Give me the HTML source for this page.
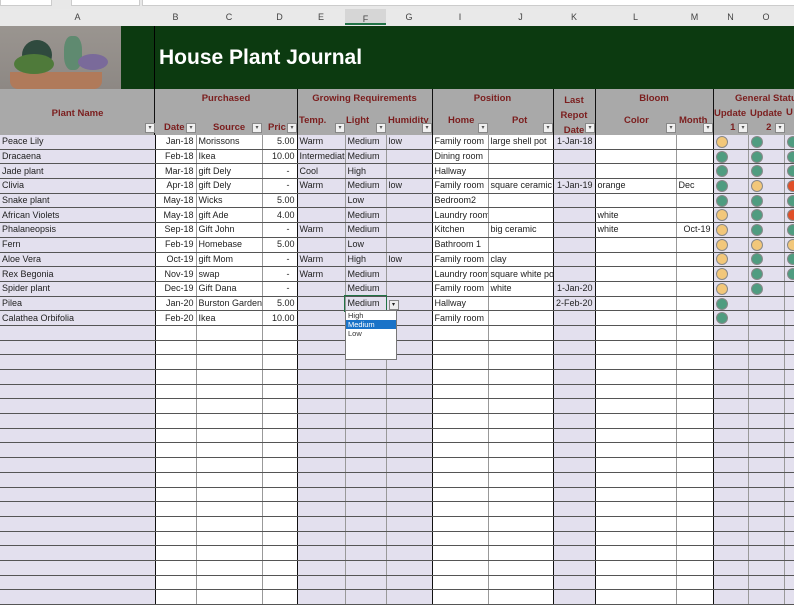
<!DOCTYPE html>
<html><head><meta charset="utf-8"><style>
body{margin:0;width:794px;height:596px;overflow:hidden;background:#fff;font-family:"Liberation Sans",sans-serif;position:relative}
.top{position:absolute;left:0;top:0;width:794px;height:9px;background:#e8e8e8}
.top div{position:absolute;top:0;height:5px;background:#fff;border:1px solid #ccc;border-top:none}
.colh{position:absolute;top:9px;left:0;width:794px;height:17px;background:#e9e9e9;border-bottom:1px solid #bbb}
.colh span{position:absolute;top:3px;font-size:9px;color:#444;text-align:center}
table{position:absolute;left:0;top:135px;width:794px;border-collapse:collapse;table-layout:fixed;font-size:9px;color:#222}
td{height:13.7px;padding:0 2px;border-bottom:1px solid #555;border-right:1px solid #999;white-space:nowrap;overflow:hidden;line-height:13px}
.l{background:#e3e0ee}.r{text-align:right}.bk{border-right:1px solid #111}
.c{display:inline-block;width:10px;height:10px;border-radius:50%;vertical-align:middle;border:1px solid #888}
.g{background:#4f9c80}.y{background:#f2c77a}.rd{background:#e04f28}
.title{position:absolute;left:0;top:26px;width:794px;height:63px;background:#0c3a10}
.hdr{position:absolute;left:0;top:89px;width:794px;height:46px;background:#a9a9a9}
.h{position:absolute;font-weight:bold;color:#7b1e1e;font-size:9.5px;text-align:center}
.fb{position:absolute;width:8px;height:8px;background:#f0f0f0;border:1px solid #888;font-size:6px;line-height:8px;text-align:center;color:#555}
.vl{position:absolute;top:89px;width:1px;height:46px;background:#111}
</style></head><body>
<div class="top"><div style="left:0;width:50px"></div><div style="left:71px;width:67px"></div><div style="left:142px;width:652px"></div></div>
<div class="colh">
<span style="left:0;width:155px">A</span><span style="left:155px;width:41px">B</span><span style="left:196px;width:66px">C</span><span style="left:262px;width:35px">D</span><span style="left:297px;width:48px">E</span><span style="left:345px;width:41px;background:#d6d6d6;top:0;height:14px;line-height:20px;border-bottom:2px solid #217346">F</span><span style="left:386px;width:46px">G</span><span style="left:432px;width:56px">I</span><span style="left:488px;width:65px">J</span><span style="left:553px;width:42px">K</span><span style="left:595px;width:81px">L</span><span style="left:676px;width:37px">M</span><span style="left:713px;width:35px">N</span><span style="left:748px;width:36px">O</span>
</div>
<div class="title">
<div style="position:absolute;left:0;top:0;width:121px;height:63px;background:linear-gradient(#9a9590,#8d8884)">
<div style="position:absolute;left:10px;top:46px;width:92px;height:17px;background:#b07a5a;border-radius:0 0 8px 8px"></div>
<div style="position:absolute;left:22px;top:14px;width:30px;height:30px;border-radius:50%;background:#2f4a3e"></div>
<div style="position:absolute;left:14px;top:28px;width:40px;height:20px;border-radius:50%;background:#4f7a3a"></div>
<div style="position:absolute;left:64px;top:10px;width:18px;height:34px;border-radius:40%;background:#5f8a70"></div>
<div style="position:absolute;left:78px;top:28px;width:30px;height:16px;border-radius:50%;background:#7a6a9a"></div>
</div>
<div style="position:absolute;left:154px;top:0;width:1px;height:63px;background:#000"></div>
<div style="position:absolute;left:159px;top:20px;font-size:21px;font-weight:bold;color:#fff">House Plant Journal</div>
</div>
<div class="hdr"></div>
<div class="vl" style="left:154px"></div><div class="vl" style="left:297px"></div><div class="vl" style="left:432px"></div><div class="vl" style="left:553px"></div><div class="vl" style="left:595px"></div><div class="vl" style="left:713px"></div>
<div class="h" style="left:0;width:155px;top:108px">Plant Name</div>
<div class="h" style="left:155px;width:142px;top:93px">Purchased</div>
<div class="h" style="left:297px;width:135px;top:93px">Growing Requirements</div>
<div class="h" style="left:432px;width:121px;top:93px">Position</div>
<div class="h" style="left:553px;width:42px;top:93px;line-height:15px">Last<br>Repot<br>Date</div>
<div class="h" style="left:595px;width:118px;top:93px">Bloom</div>
<div class="h" style="left:713px;width:100px;top:93px;text-align:left;padding-left:22px">General Status</div>
<div class="h" style="left:164px;top:122px">Date</div>
<div class="h" style="left:213px;top:122px">Source</div>
<div class="h" style="left:268px;top:122px">Pric</div>
<div class="h" style="left:299px;top:115px">Temp.</div>
<div class="h" style="left:346px;top:115px">Light</div>
<div class="h" style="left:388px;top:115px">Humidity</div>
<div class="h" style="left:448px;top:115px">Home</div>
<div class="h" style="left:512px;top:115px">Pot</div>
<div class="h" style="left:624px;top:115px">Color</div>
<div class="h" style="left:679px;top:115px">Month</div>
<div class="h" style="left:714px;top:107px;line-height:14px">Update<br>&nbsp;&nbsp;1</div>
<div class="h" style="left:750px;top:107px;line-height:14px">Update<br>&nbsp;&nbsp;2</div>
<div class="h" style="left:786px;top:107px">U</div>
<div class="fb" style="left:145px;top:123px">▾</div><div class="fb" style="left:186px;top:123px">▾</div><div class="fb" style="left:252px;top:123px">▾</div><div class="fb" style="left:287px;top:123px">▾</div><div class="fb" style="left:335px;top:123px">▾</div><div class="fb" style="left:376px;top:123px">▾</div><div class="fb" style="left:422px;top:123px">▾</div><div class="fb" style="left:478px;top:123px">▾</div><div class="fb" style="left:543px;top:123px">▾</div><div class="fb" style="left:585px;top:123px">▾</div><div class="fb" style="left:666px;top:123px">▾</div><div class="fb" style="left:703px;top:123px">▾</div><div class="fb" style="left:738px;top:123px">▾</div><div class="fb" style="left:775px;top:123px">▾</div>
<table>
<colgroup><col style="width:155px"><col style="width:41px"><col style="width:66px"><col style="width:35px"><col style="width:48px"><col style="width:41px"><col style="width:46px"><col style="width:56px"><col style="width:65px"><col style="width:42px"><col style="width:81px"><col style="width:37px"><col style="width:35px"><col style="width:36px"><col style="width:10px"></colgroup>
<tr><td class="l bk">Peace Lily</td><td class="r">Jan-18</td><td>Morissons</td><td class="r bk">5.00</td><td class="l">Warm</td><td class="l">Medium</td><td class="l bk">low</td><td>Family room</td><td class="bk">large shell pot</td><td class="l r bk">1-Jan-18</td><td></td><td class="bk"></td><td class="l"><span class="c y"></span></td><td class="l"><span class="c g"></span></td><td class="l"><span class="c g"></span></td></tr>
<tr><td class="l bk">Dracaena</td><td class="r">Feb-18</td><td>Ikea</td><td class="r bk">10.00</td><td class="l">Intermediat</td><td class="l">Medium</td><td class="l bk"></td><td>Dining room</td><td class="bk"></td><td class="l bk"></td><td></td><td class="bk"></td><td class="l"><span class="c g"></span></td><td class="l"><span class="c g"></span></td><td class="l"><span class="c g"></span></td></tr>
<tr><td class="l bk">Jade plant</td><td class="r">Mar-18</td><td>gift Dely</td><td class="r bk">-&nbsp;&nbsp;</td><td class="l">Cool</td><td class="l">High</td><td class="l bk"></td><td>Hallway</td><td class="bk"></td><td class="l bk"></td><td></td><td class="bk"></td><td class="l"><span class="c g"></span></td><td class="l"><span class="c g"></span></td><td class="l"><span class="c g"></span></td></tr>
<tr><td class="l bk">Clivia</td><td class="r">Apr-18</td><td>gift Dely</td><td class="r bk">-&nbsp;&nbsp;</td><td class="l">Warm</td><td class="l">Medium</td><td class="l bk">low</td><td>Family room</td><td class="bk">square ceramic</td><td class="l r bk">1-Jan-19</td><td>orange</td><td class="bk">Dec</td><td class="l"><span class="c g"></span></td><td class="l"><span class="c y"></span></td><td class="l"><span class="c rd"></span></td></tr>
<tr><td class="l bk">Snake plant</td><td class="r">May-18</td><td>Wicks</td><td class="r bk">5.00</td><td class="l"></td><td class="l">Low</td><td class="l bk"></td><td>Bedroom2</td><td class="bk"></td><td class="l bk"></td><td></td><td class="bk"></td><td class="l"><span class="c g"></span></td><td class="l"><span class="c g"></span></td><td class="l"><span class="c g"></span></td></tr>
<tr><td class="l bk">African Violets</td><td class="r">May-18</td><td>gift Ade</td><td class="r bk">4.00</td><td class="l"></td><td class="l">Medium</td><td class="l bk"></td><td>Laundry room</td><td class="bk"></td><td class="l bk"></td><td>white</td><td class="bk"></td><td class="l"><span class="c y"></span></td><td class="l"><span class="c g"></span></td><td class="l"><span class="c rd"></span></td></tr>
<tr><td class="l bk">Phalaneopsis</td><td class="r">Sep-18</td><td>Gift John</td><td class="r bk">-&nbsp;&nbsp;</td><td class="l">Warm</td><td class="l">Medium</td><td class="l bk"></td><td>Kitchen</td><td class="bk">big ceramic</td><td class="l bk"></td><td>white</td><td class="r bk">Oct-19</td><td class="l"><span class="c y"></span></td><td class="l"><span class="c g"></span></td><td class="l"><span class="c g"></span></td></tr>
<tr><td class="l bk">Fern</td><td class="r">Feb-19</td><td>Homebase</td><td class="r bk">5.00</td><td class="l"></td><td class="l">Low</td><td class="l bk"></td><td>Bathroom 1</td><td class="bk"></td><td class="l bk"></td><td></td><td class="bk"></td><td class="l"><span class="c y"></span></td><td class="l"><span class="c y"></span></td><td class="l"><span class="c y"></span></td></tr>
<tr><td class="l bk">Aloe Vera</td><td class="r">Oct-19</td><td>gift Mom</td><td class="r bk">-&nbsp;&nbsp;</td><td class="l">Warm</td><td class="l">High</td><td class="l bk">low</td><td>Family room</td><td class="bk">clay</td><td class="l bk"></td><td></td><td class="bk"></td><td class="l"><span class="c y"></span></td><td class="l"><span class="c g"></span></td><td class="l"><span class="c g"></span></td></tr>
<tr><td class="l bk">Rex Begonia</td><td class="r">Nov-19</td><td>swap</td><td class="r bk">-&nbsp;&nbsp;</td><td class="l">Warm</td><td class="l">Medium</td><td class="l bk"></td><td>Laundry room</td><td class="bk">square white pot</td><td class="l bk"></td><td></td><td class="bk"></td><td class="l"><span class="c y"></span></td><td class="l"><span class="c g"></span></td><td class="l"><span class="c g"></span></td></tr>
<tr><td class="l bk">Spider plant</td><td class="r">Dec-19</td><td>Gift Dana</td><td class="r bk">-&nbsp;&nbsp;</td><td class="l"></td><td class="l">Medium</td><td class="l bk"></td><td>Family room</td><td class="bk">white</td><td class="l r bk">1-Jan-20</td><td></td><td class="bk"></td><td class="l"><span class="c y"></span></td><td class="l"><span class="c g"></span></td><td class="l"></td></tr>
<tr><td class="l bk">Pilea</td><td class="r">Jan-20</td><td>Burston Garden</td><td class="r bk">5.00</td><td class="l"></td><td class="l" style="outline:1px solid #217346">Medium</td><td class="l bk"><span style="display:inline-block;width:8px;height:8px;border:1px solid #888;background:#eee;font-size:6px;line-height:8px;text-align:center">▾</span></td><td>Hallway</td><td class="bk"></td><td class="l r bk">2-Feb-20</td><td></td><td class="bk"></td><td class="l"><span class="c g"></span></td><td class="l"></td><td class="l"></td></tr>
<tr><td class="l bk">Calathea Orbifolia</td><td class="r">Feb-20</td><td>Ikea</td><td class="r bk">10.00</td><td class="l"></td><td class="l"></td><td class="l bk"></td><td>Family room</td><td class="bk"></td><td class="l bk"></td><td></td><td class="bk"></td><td class="l"><span class="c g"></span></td><td class="l"></td><td class="l"></td></tr>
<tr><td class="l bk"></td><td></td><td></td><td class="bk"></td><td class="l"></td><td class="l"></td><td class="l bk"></td><td></td><td class="bk"></td><td class="l bk"></td><td></td><td class="bk"></td><td class="l"></td><td class="l"></td><td class="l"></td></tr>
<tr><td class="l bk"></td><td></td><td></td><td class="bk"></td><td class="l"></td><td class="l"></td><td class="l bk"></td><td></td><td class="bk"></td><td class="l bk"></td><td></td><td class="bk"></td><td class="l"></td><td class="l"></td><td class="l"></td></tr>
<tr><td class="l bk"></td><td></td><td></td><td class="bk"></td><td class="l"></td><td class="l"></td><td class="l bk"></td><td></td><td class="bk"></td><td class="l bk"></td><td></td><td class="bk"></td><td class="l"></td><td class="l"></td><td class="l"></td></tr>
<tr><td class="l bk"></td><td></td><td></td><td class="bk"></td><td class="l"></td><td class="l"></td><td class="l bk"></td><td></td><td class="bk"></td><td class="l bk"></td><td></td><td class="bk"></td><td class="l"></td><td class="l"></td><td class="l"></td></tr>
<tr><td class="l bk"></td><td></td><td></td><td class="bk"></td><td class="l"></td><td class="l"></td><td class="l bk"></td><td></td><td class="bk"></td><td class="l bk"></td><td></td><td class="bk"></td><td class="l"></td><td class="l"></td><td class="l"></td></tr>
<tr><td class="l bk"></td><td></td><td></td><td class="bk"></td><td class="l"></td><td class="l"></td><td class="l bk"></td><td></td><td class="bk"></td><td class="l bk"></td><td></td><td class="bk"></td><td class="l"></td><td class="l"></td><td class="l"></td></tr>
<tr><td class="l bk"></td><td></td><td></td><td class="bk"></td><td class="l"></td><td class="l"></td><td class="l bk"></td><td></td><td class="bk"></td><td class="l bk"></td><td></td><td class="bk"></td><td class="l"></td><td class="l"></td><td class="l"></td></tr>
<tr><td class="l bk"></td><td></td><td></td><td class="bk"></td><td class="l"></td><td class="l"></td><td class="l bk"></td><td></td><td class="bk"></td><td class="l bk"></td><td></td><td class="bk"></td><td class="l"></td><td class="l"></td><td class="l"></td></tr>
<tr><td class="l bk"></td><td></td><td></td><td class="bk"></td><td class="l"></td><td class="l"></td><td class="l bk"></td><td></td><td class="bk"></td><td class="l bk"></td><td></td><td class="bk"></td><td class="l"></td><td class="l"></td><td class="l"></td></tr>
<tr><td class="l bk"></td><td></td><td></td><td class="bk"></td><td class="l"></td><td class="l"></td><td class="l bk"></td><td></td><td class="bk"></td><td class="l bk"></td><td></td><td class="bk"></td><td class="l"></td><td class="l"></td><td class="l"></td></tr>
<tr><td class="l bk"></td><td></td><td></td><td class="bk"></td><td class="l"></td><td class="l"></td><td class="l bk"></td><td></td><td class="bk"></td><td class="l bk"></td><td></td><td class="bk"></td><td class="l"></td><td class="l"></td><td class="l"></td></tr>
<tr><td class="l bk"></td><td></td><td></td><td class="bk"></td><td class="l"></td><td class="l"></td><td class="l bk"></td><td></td><td class="bk"></td><td class="l bk"></td><td></td><td class="bk"></td><td class="l"></td><td class="l"></td><td class="l"></td></tr>
<tr><td class="l bk"></td><td></td><td></td><td class="bk"></td><td class="l"></td><td class="l"></td><td class="l bk"></td><td></td><td class="bk"></td><td class="l bk"></td><td></td><td class="bk"></td><td class="l"></td><td class="l"></td><td class="l"></td></tr>
<tr><td class="l bk"></td><td></td><td></td><td class="bk"></td><td class="l"></td><td class="l"></td><td class="l bk"></td><td></td><td class="bk"></td><td class="l bk"></td><td></td><td class="bk"></td><td class="l"></td><td class="l"></td><td class="l"></td></tr>
<tr><td class="l bk"></td><td></td><td></td><td class="bk"></td><td class="l"></td><td class="l"></td><td class="l bk"></td><td></td><td class="bk"></td><td class="l bk"></td><td></td><td class="bk"></td><td class="l"></td><td class="l"></td><td class="l"></td></tr>
<tr><td class="l bk"></td><td></td><td></td><td class="bk"></td><td class="l"></td><td class="l"></td><td class="l bk"></td><td></td><td class="bk"></td><td class="l bk"></td><td></td><td class="bk"></td><td class="l"></td><td class="l"></td><td class="l"></td></tr>
<tr><td class="l bk"></td><td></td><td></td><td class="bk"></td><td class="l"></td><td class="l"></td><td class="l bk"></td><td></td><td class="bk"></td><td class="l bk"></td><td></td><td class="bk"></td><td class="l"></td><td class="l"></td><td class="l"></td></tr>
<tr><td class="l bk"></td><td></td><td></td><td class="bk"></td><td class="l"></td><td class="l"></td><td class="l bk"></td><td></td><td class="bk"></td><td class="l bk"></td><td></td><td class="bk"></td><td class="l"></td><td class="l"></td><td class="l"></td></tr>
<tr><td class="l bk"></td><td></td><td></td><td class="bk"></td><td class="l"></td><td class="l"></td><td class="l bk"></td><td></td><td class="bk"></td><td class="l bk"></td><td></td><td class="bk"></td><td class="l"></td><td class="l"></td><td class="l"></td></tr>
</table>
<div style="position:absolute;left:345px;top:310px;width:50px;height:48px;background:#fff;border:1px solid #777;font-size:7.5px;color:#333;line-height:9px">
<div style="padding-left:2px">High</div><div style="padding-left:2px;background:#1a73c8;color:#fff">Medium</div><div style="padding-left:2px">Low</div></div>
</body></html>
